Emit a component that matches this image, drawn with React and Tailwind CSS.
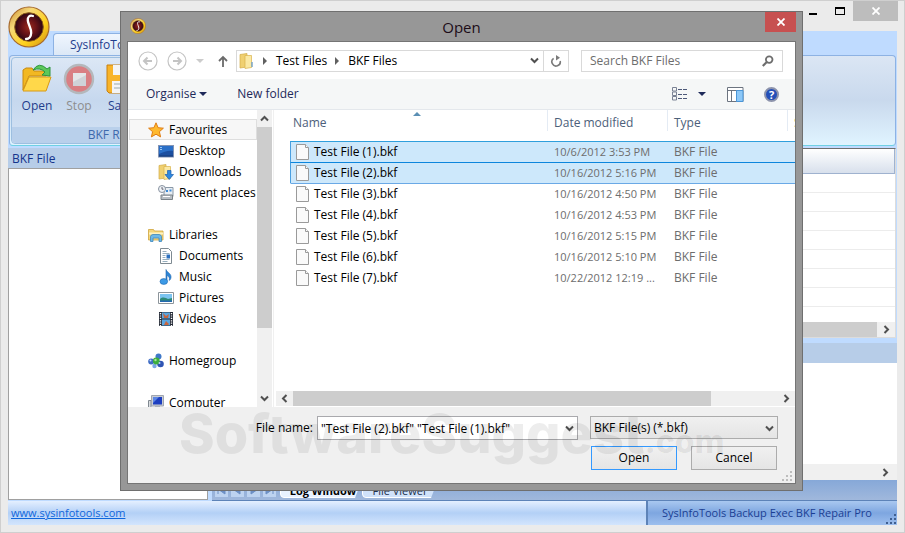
import React from "react";

const files = [
  ["Test File (1).bkf", "10/6/2012 3:53 PM"],
  ["Test File (2).bkf", "10/16/2012 5:16 PM"],
  ["Test File (3).bkf", "10/16/2012 4:50 PM"],
  ["Test File (4).bkf", "10/16/2012 4:53 PM"],
  ["Test File (5).bkf", "10/16/2012 5:15 PM"],
  ["Test File (6).bkf", "10/16/2012 5:10 PM"],
  ["Test File (7).bkf", "10/22/2012 12:19 ..."],
];

const rowEdge = ["border-[#2f9fdc]", "border-[#0c86dd]", "border-[#6aa9e6]"];

function Chevron({ dir = "down", className = "" }) {
  const turn = { down: "", up: "rotate-180", left: "rotate-90", right: "-rotate-90" }[dir];
  return (
    <svg viewBox="0 0 9 9" className={`h-[9px] w-[9px] shrink-0 ${turn} ${className}`} fill="none" stroke="#505050" strokeWidth="2">
      <path d="M1 2.5 4.5 6 8 2.5" />
    </svg>
  );
}

function Caret({ color = "#1e2a5a" }) {
  return (
    <svg viewBox="0 0 8 4" className="h-1 w-2 shrink-0" fill={color}>
      <path d="M0 0h8L4 4z" />
    </svg>
  );
}

function Logo({ className }) {
  return (
    <svg viewBox="0 0 42 42" className={className}>
      <defs>
        <linearGradient id="gold" x1="0" y1="0" x2="1" y2="1">
          <stop offset="0" stopColor="#c8862a" />
          <stop offset=".3" stopColor="#f6d878" />
          <stop offset=".65" stopColor="#ffd21c" />
          <stop offset="1" stopColor="#c98a1c" />
        </linearGradient>
        <radialGradient id="wine">
          <stop offset="0" stopColor="#9a2a1c" />
          <stop offset=".5" stopColor="#6a1418" />
          <stop offset="1" stopColor="#2c0614" />
        </radialGradient>
      </defs>
      <circle cx="21" cy="21" r="20" fill="url(#gold)" stroke="#a5682c" strokeWidth="1.2" />
      <circle cx="21" cy="21" r="14.3" fill="url(#wine)" stroke="#8a5a18" />
      <path d="M25 10c-3.500-1.200-5.600 1-5.200 4.500.4 4.200 3.600 7.500 3.400 12.500-.2 3.500-2.200 6-5.200 6" fill="none" stroke="#fff" strokeWidth="2.300" strokeLinecap="round" />
    </svg>
  );
}

const Folder = ({ children }) => (
  <>
    <path d="M1 1.500 8 .5v13.500l-7 1z" fill="#f0d070" stroke="#d2ac48" strokeWidth=".7" />
    <path d="M6 2.500h6.500v12L6 15.500z" fill="#fbe9a4" stroke="#d8b24c" strokeWidth=".7" />
    {children}
  </>
);

const icons = {
  star: (
    <path d="m8 .8 2.100 4.900 5.300.5-4 3.500 1.200 5.200L8 12.200l-4.600 2.700 1.200-5.200-4-3.500 5.300-.5z" fill="#ffb92e" stroke="#df7d14" />
  ),
  desktop: (
    <>
      <rect x=".5" y="2.500" width="15" height="11.500" fill="#1c4fa0" stroke="#8394b4" />
      <path d="M1 3h14v5C10 7 6 9 1 11z" fill="#2b70c8" />
      <path d="M1 12.500h14v1H1z" fill="#173a74" />
      <path d="M2 4h2v1H2zM2 6h2v1H2z" fill="#9cc8f4" />
    </>
  ),
  folder: (
    <Folder>
      <path d="M13 9v5" stroke="#7aa6c8" strokeWidth="1.500" />
    </Folder>
  ),
  downloads: (
    <Folder>
      <path d="M9.500 6.500h3.500v4h2.500L11.200 15.500 7 10.500h2.500z" fill="#2f88e0" stroke="#1c5fae" strokeWidth=".7" />
    </Folder>
  ),
  recent: (
    <>
      <path d="M6 2.500h9v9H6z" fill="#e8eef4" stroke="#8a98a6" />
      <path d="M8 5h2v2H8zM11.500 4.500h2v2h-2z" fill="#3a8ad8" />
      <path d="M3 10h11.500v4.500H3z" fill="#b8bec4" stroke="#7a8288" />
      <path d="M5 11.500h7" stroke="#fff" />
      <circle cx="4" cy="4" r="3.500" fill="#eef2f6" stroke="#8892a0" />
      <path d="M4 2v2.200h1.500" fill="none" stroke="#445" strokeWidth=".8" />
    </>
  ),
  libraries: (
    <>
      <path d="M.5 13V2.500h5l1 1.500h8.500v9z" fill="#f4d67a" stroke="#cfa53e" strokeWidth=".8" />
      <path d="M1 5.500h14v2H1z" fill="#fdf2c0" />
      <path d="M2.500 14.500V9.500Q3 7.500 5 7.500h6q2 0 2.500 2v5h-2.500v-3.500h-6v3.500z" fill="#6cb8e6" stroke="#3c86bc" strokeWidth=".8" />
    </>
  ),
  documents: (
    <>
      <path d="M2.500.5h8l3 3v12h-11z" fill="#fff" stroke="#7e8a92" />
      <path d="M4.500 3.500h4M4.500 5.500h7M4.500 7.500h3M4.500 9.500h3M4.500 11.500h7M4.500 13.500h5" stroke="#8aa6b8" strokeWidth=".9" />
      <path d="M8.500 6.500h3.500v4H8.500z" fill="#2a70c0" />
    </>
  ),
  music: (
    <>
      <path d="M8 .5c1 3 5.500 4 5 8-.3 1.800-1 2.500-1.800 3 .8-3-.7-4.500-2.200-5v6H8z" fill="#2f86d6" stroke="#1f66b0" strokeWidth=".6" />
      <ellipse cx="5.800" cy="12.500" rx="3.800" ry="2.900" fill="#3c9ae6" stroke="#1f66b0" strokeWidth=".6" />
    </>
  ),
  pictures: (
    <>
      <path d="M.5 2.500h15v11H.5z" fill="#fff" stroke="#8c949a" />
      <path d="M2 4h12v8H2z" fill="#7cc4f0" />
      <path d="M2 9c3-3 6-1 8 0l4-1v4H2z" fill="#2e8a78" />
      <path d="M2 10.500h12V12H2z" fill="#2468b0" />
    </>
  ),
  videos: (
    <>
      <path d="M1 1h14v14H1z" fill="#242a36" />
      <path d="M4 1.500h8v6H4zM4 8.500h8v6H4z" fill="#5aa6e0" />
      <path d="m5 2 3 3 3-2-1 4H6zM6 14l2-4 3 3-1 1z" fill="#c8643c" />
      <path d="M2.500 2v13M13.500 2v13" stroke="#fff" strokeWidth="1.400" strokeDasharray="1.200 1.200" />
    </>
  ),
  homegroup: (
    <>
      <circle cx="10.500" cy="3.500" r="3" fill="#3f78c8" />
      <circle cx="3.200" cy="8.500" r="3" fill="#3f6cc4" />
      <circle cx="12.500" cy="11" r="3.300" fill="#2f55b4" />
      <circle cx="6.500" cy="13" r="2.200" fill="#7aa8e4" />
      <circle cx="8.300" cy="8" r="3.400" fill="#3cae3c" />
      <circle cx="7.500" cy="7" r="1.200" fill="#a8e49a" />
      <circle cx="11.500" cy="10" r="1" fill="#b8d0f4" />
      <circle cx="2.500" cy="7.500" r="1" fill="#c0d8f8" />
    </>
  ),
  computer: (
    <>
      <path d="M.5 5.500h2.500v8H.5z" fill="#d8dce0" stroke="#808890" />
      <path d="M3.500 .5h12v10.500h-12z" fill="#c8ccd4" stroke="#a0a6b0" />
      <path d="M5 2h9v7.500H5z" fill="#1c3ec0" />
      <path d="M5 2h6L5 8z" fill="#5c86e4" />
      <path d="M7 11.500h5v2H7z" fill="#8c949c" />
    </>
  ),
};

function Icon({ name }) {
  return (
    <svg viewBox="0 0 16 16" className="h-4 w-4 shrink-0">
      {icons[name]}
    </svg>
  );
}

const tree = [
  ["star", "Favourites", 0],
  ["desktop", "Desktop", 1],
  ["downloads", "Downloads", 1],
  ["recent", "Recent places", 1],
  null,
  ["libraries", "Libraries", 0],
  ["documents", "Documents", 1],
  ["music", "Music", 1],
  ["pictures", "Pictures", 1],
  ["videos", "Videos", 1],
  null,
  ["homegroup", "Homegroup", 0],
  null,
  ["computer", "Computer", 0],
];

function Grip({ color, className }) {
  return (
    <svg viewBox="0 0 11 11" className={`h-[11px] w-[11px] ${className}`} fill={color}>
      <path d="M8 0h2v2H8zM4 4h2v2H4zM8 4h2v2H8zM0 8h2v2H0zM4 8h2v2H4zM8 8h2v2H8z" />
    </svg>
  );
}

function RibbonButton({ label, disabled, children }) {
  return (
    <button disabled={disabled} className={`flex w-[42px] flex-col items-center ${disabled ? "text-[#8d8d8d]" : "text-[#1f3d8c]"}`}>
      <svg viewBox="0 0 32 32" className="h-8 w-8">{children}</svg>
      <span className="mt-[3px] leading-4">{label}</span>
    </button>
  );
}

function MainWindow() {
  return (
    <div className="flex min-h-screen flex-col border border-[#cfcfcf] bg-[#ebebeb]">
      <header className="flex h-[30px] shrink-0 items-start justify-end pr-[6px]">
        <button aria-label="Minimise" className="flex h-5 w-[26px] items-center justify-center">
          <svg viewBox="0 0 8 8" className="h-2 w-2"><path d="M0 6h8v2H0z" /></svg>
        </button>
        <button aria-label="Maximise" className="flex h-5 w-[27px] items-center justify-center">
          <svg viewBox="0 0 10 8" className="h-2 w-[10px]"><path d="M0 0h10v8H0zM1 2v5h8V2z" fillRule="evenodd" /></svg>
        </button>
        <button aria-label="Close" className="flex h-5 w-[45px] items-center justify-center bg-[#bdbdbd]">
          <svg viewBox="0 0 8 8" className="h-2 w-2" stroke="#fff" strokeWidth="1.800"><path d="m.5.5 7 7m0-7-7 7" /></svg>
        </button>
      </header>

      <div className="mx-[7px] mb-[7px] flex flex-1 flex-col bg-[#bfdbff]">
        <div className="flex h-6 shrink-0 items-end pl-[45px]">
          <button className="h-[22px] w-[110px] rounded-t border border-b-0 border-[#8db2e3] bg-gradient-to-b from-[#f0f6fe] to-[#dce8f6] pl-4 text-left whitespace-nowrap text-[#1f3d8c]">SysInfoTools</button>
        </div>
        <div className="mx-px flex h-[91px] shrink-0 flex-col overflow-hidden rounded border border-[#8db2e3] border-b-[#6fd0e4] bg-gradient-to-b from-[#dbe6f4] via-[#c9d9ed] to-[#e0f4ff] p-px">
          <div className="flex w-[214px] flex-1 flex-col rounded border border-[#9dbfe0] bg-gradient-to-b from-[#dce7f5] via-[#c6d8ee] to-[#d3e2f4] text-xs">
            <div className="flex flex-1 pt-[5px] pl-1">
              <RibbonButton label="Open">
                <path d="M2 27V7l3-2h6l2 3h12v5H8z" fill="#f2b822" stroke="#c78a10" />
                <path d="m2 28 6-14h22l-5 14z" fill="#ffd84a" stroke="#d89a14" />
                <path d="M12 7Q18-2 26 6l3-2v9l-8-1 3-3q-5-5-12-2z" fill="#5cc85a" stroke="#2f9440" />
              </RibbonButton>
              <RibbonButton label="Stop" disabled>
                <circle cx="16" cy="16" r="14" fill="#d97f83" stroke="#b4b8bc" strokeWidth="2.400" />
                <path d="M10 10h13v13H10z" fill="#e4e6e8" />
                <path d="M10 19 23 12v11H10z" fill="#cfd3d8" />
              </RibbonButton>
              <RibbonButton label="Save">
                <path d="M2 2h28v28H4l-2-2z" fill="#f8b42a" stroke="#c78010" />
                <path d="M8 2h16v10H8zM7 18h18v12H7z" fill="#f4f4f4" />
                <path d="M9 21h14M9 25h14" stroke="#9aa" />
              </RibbonButton>
            </div>
            <div className="h-4 rounded-b bg-[#b9d0eb] text-center text-xs leading-4 text-[#3f69ac]">BKF Repair</div>
          </div>
        </div>

        <div className="flex flex-1 pt-[2px]">
          <aside className="flex w-[200px] flex-col">
            <h2 className="h-5 bg-[#b7cde8] pl-1 text-xs leading-[22px] text-[#15348c]">BKF File</h2>
            <div className="mb-px flex-1 border border-[#a0a0a0] bg-white" />
          </aside>
          <section className="ml-1 flex flex-1 flex-col">
            <div className="mr-px flex h-[190px] shrink-0 flex-col border-t border-t-[#6d6d6d] border-r border-r-[#dcdcdc] border-b border-b-[#dcdcdc] bg-white">
              <div className="h-[25px] border-r border-b border-[#9fb2cf] bg-gradient-to-b from-white to-[#d8e0ec]" />
              <div className="flex flex-1 flex-col">
                {[0, 1, 2, 3, 4, 5, 6].map((i) => (
                  <div key={i} className="h-[19px] border-b border-[#ececec]" />
                ))}
              </div>
              <div className="flex h-[15px] items-center bg-[#f0f0f0]">
                <div className="h-full flex-1 bg-[#cdcdcd]" />
                <div className="flex w-[18px] justify-center"><Chevron dir="right" /></div>
              </div>
            </div>
            <div className="mt-[5px] h-5 bg-[#b7cde8]" />
            <div className="flex flex-1 flex-col bg-white">
              <div className="flex-1" />
              <div className="flex h-4 items-center justify-end bg-[#f0f0f0] pr-[7px]"><Chevron dir="right" /></div>
            </div>
            <nav className="flex h-[21px] shrink-0 items-start border-b border-[#5d83b8] bg-gradient-to-b from-[#86a8d8] to-[#a0b8dc] text-[11px] leading-[20px]">
              {["M3 3v7M10 3 5 6.500l5 3.500z", "M9 3 4 6.500 9 10z", "M4 3l5 3.500L4 10z", "M3 3l5 3.500L3 10zM10 3v7"].map((d, i) => (
                <button key={i} aria-label={["First", "Previous", "Next", "Last"][i]} className="mt-1 ml-[3px] h-[13px] w-[13px] bg-[#bdd3f0]">
                  <svg viewBox="0 0 13 13" className="h-[13px] w-[13px]" fill="#6c8fc4" stroke="#6c8fc4"><path d={d} /></svg>
                </button>
              ))}
              <button className="ml-1 h-[18px] w-[82px] rounded-b border border-white bg-[#e8f2ff] pl-1 font-bold whitespace-nowrap text-black [clip-path:polygon(0_0,100%_0,calc(100%-7px)_100%,0_100%)]">Log Window</button>
              <button className="h-[18px] w-[76px] rounded-b border border-white bg-[#d0e2fa] whitespace-nowrap text-[#20304c] [clip-path:polygon(0_0,100%_0,calc(100%-7px)_100%,0_100%)]">File Viewer</button>
            </nav>
          </section>
        </div>

        <footer className="flex h-6 shrink-0 items-stretch bg-gradient-to-b from-[#e4efff] via-[#b3d0f6] to-[#d3e5fd] text-[11px] leading-[24px]">
          <a href="http://www.sysinfotools.com" className="flex-1 pl-[3px] text-[#0f66dc] underline">www.sysinfotools.com</a>
          <div className="flex w-[251px] items-end justify-between border-l-2 border-[#5d83b8] bg-gradient-to-b from-[#a9c8f0] via-[#7ea6e0] to-[#9dbfee] pl-[14px] text-[#1b3f94]">
            <span className="whitespace-nowrap">SysInfoTools Backup Exec BKF Repair Pro</span>
            <Grip color="#3f5f90" className="shrink-0" />
          </div>
        </footer>
      </div>
      <Logo className="absolute top-[6px] left-2 h-[42px] w-[42px]" />
    </div>
  );
}

function NavRow() {
  return (
    <div className="flex h-[37px] shrink-0 items-center pr-3 pl-[10px]">
      {["M14 10H6m3.500-3.500L6 10l3.500 3.500", "M6 10h8m-3.500-3.500L14 10l-3.500 3.500"].map((d, i) => (
        <button key={d} aria-label={i ? "Forward" : "Back"} className="mr-[9px]">
          <svg viewBox="0 0 20 20" className="h-5 w-5" fill="none" stroke="#c4c4c4">
            <circle cx="10" cy="10" r="9" strokeWidth="1.200" />
            <path d={d} strokeWidth="2" />
          </svg>
        </button>
      ))}
      <Caret color="#cccccc" />
      <button aria-label="Up" className="ml-[14px]">
        <svg viewBox="0 0 10 12" className="h-3 w-[10px]" fill="none" stroke="#6a6a6a" strokeWidth="1.800"><path d="M5 12V2M1 6l4-4 4 4" /></svg>
      </button>
      <div className="ml-2 flex h-[22px] flex-1 items-center border border-[#d9d9d9] pl-[2px]">
        <Icon name="folder" />
        <svg viewBox="0 0 4 8" className="ml-2 h-2 w-1" fill="#606060"><path d="m0 0 4 4-4 4z" /></svg>
        <button className="ml-[9px] whitespace-nowrap">Test Files</button>
        <svg viewBox="0 0 4 8" className="ml-2 h-2 w-1" fill="#606060"><path d="m0 0 4 4-4 4z" /></svg>
        <button className="ml-[9px] whitespace-nowrap">BKF Files</button>
        <button aria-label="Previous locations" className="mr-[4px] ml-auto"><Chevron /></button>
        <button aria-label="Refresh" className="flex h-full w-[25px] items-center justify-center border-l border-[#d9d9d9]">
          <svg viewBox="0 0 12 12" className="h-3 w-3" fill="none" stroke="#7a7a7a" strokeWidth="1.600">
            <path d="M3.600 3.400A4.200 4.200 0 1 0 10.200 6" />
            <path d="M6 0v5.500L10 2.700z" fill="#7a7a7a" stroke="none" />
          </svg>
        </button>
      </div>
      <div className="ml-3 flex h-[22px] w-[202px] items-center border border-[#d9d9d9] pr-2">
        <input aria-label="Search" placeholder="Search BKF Files" className="min-w-0 flex-1 bg-transparent pl-2 outline-none placeholder:text-[#6d6d6d]" />
        <svg viewBox="0 0 12 12" className="h-3 w-3" fill="none" stroke="#6d6d6d" strokeWidth="1.800">
          <circle cx="7.200" cy="4.600" r="3.300" /><path d="M4.800 7 .8 11" strokeWidth="2.200" />
        </svg>
      </div>
    </div>
  );
}

function Toolbar() {
  return (
    <div className="flex h-[31px] shrink-0 items-center border-b border-[#e4e8ec] bg-[#f5f7f7] pr-4 pl-[18px] text-[#1e2a5a]">
      <button className="flex items-center gap-[3px]">Organise <Caret /></button>
      <button className="ml-[30px]">New folder</button>
      <button aria-label="Change view" className="ml-auto flex items-center gap-[10px]">
        <svg viewBox="0 0 16 14" className="h-[14px] w-4" fill="none" stroke="#7a8294">
          <path d="M.5.5h4v3.500h-4zM.5 5h4v3.500h-4zM.5 9.500h4v3.500h-4z" />
          <path d="M6 2.500h10M6 7.500h10M6 11.500h10" stroke="#4c5878" strokeDasharray="4 1" />
        </svg>
        <Caret />
      </button>
      <button aria-label="Preview pane" className="ml-[21px]">
        <svg viewBox="0 0 17 15" className="h-[15px] w-[17px]" fill="#fff" stroke="#6c7480">
          <path d="M.5.500h15.500v14H.5zM.5 3.500h15.500M4.500 3.500v11" /><path d="M9.500 3.500h6.500V14.500H9.500z" fill="#8cc8f8" stroke="#4a96d8" />
        </svg>
      </button>
      <button aria-label="Help" className="ml-5 flex h-[15px] w-[15px] items-center justify-center rounded-full border-2 border-[#8d94ac] bg-[#2450b8] text-[11px] leading-none font-bold text-white">?</button>
    </div>
  );
}

function Sidebar() {
  return (
    <div className="flex shrink-0 overflow-hidden">
      <ul className="w-[129px] pt-[9px] pl-px">
        {tree.map((n, i) =>
          n ? (
            <li key={i} className={`flex h-[21px] items-center gap-[5px] border whitespace-nowrap ${i === 0 ? "border-[#dedede] bg-[#f7f7f7]" : "border-transparent"} ${n[2] ? "pl-7" : "pl-[18px]"}`}>
              <Icon name={n[0]} />
              {n[1]}
            </li>
          ) : (
            <li key={i} className="h-[21px]" />
          )
        )}
      </ul>
      <div className="flex w-[15px] flex-col items-center bg-[#f0f0f0]">
        <div className="flex h-[17px] items-center"><Chevron dir="up" /></div>
        <div className="h-[201px] w-full bg-[#cdcdcd]" />
        <div className="mt-auto flex h-[17px] items-center"><Chevron /></div>
      </div>
      <div className="ml-px w-[3px] border-l border-[#f0f0f0]" />
    </div>
  );
}

function HeaderCell({ children, className = "" }) {
  return (
    <th scope="col" className="relative h-[31px] p-0 text-left align-top font-normal text-[#4c607a]">
      <span className={`block h-[21px] overflow-hidden border-l pt-1 pl-[6px] leading-[18px] ${className}`}>{children}</span>
    </th>
  );
}

function FileList() {
  return (
    <div className="flex min-w-0 flex-1 flex-col">
      <div className="flex-1 overflow-hidden pl-[14px]">
        <table className="w-full table-fixed border-separate border-spacing-0">
          <colgroup>
            <col />
            <col className="w-[120px]" />
            <col className="w-[120px]" />
            <col className="w-2" />
          </colgroup>
          <thead>
            <tr>
              <HeaderCell className="-ml-1 border-transparent">
                Name
                <svg viewBox="0 0 8 4" className="absolute top-[2px] left-[123px] h-1 w-2" fill="#5b8fb4"><path d="M0 4h8L4 0z" /></svg>
              </HeaderCell>
              <HeaderCell className="border-[#e4ebf4]">Date modified</HeaderCell>
              <HeaderCell className="border-[#e4ebf4]">Type</HeaderCell>
              <HeaderCell className="border-[#e4ebf4] text-[#d9a860]">S</HeaderCell>
            </tr>
          </thead>
          <tbody className="whitespace-nowrap text-[#6d6d6d]">
            {files.map(([name, date], i) => {
              const cell = `h-[21px] border-t p-0 leading-5 ${rowEdge[i] || "border-transparent"} ${i < 2 ? "bg-[#cde8fb]" : ""}`;
              return (
                <tr key={name} aria-selected={i < 2}>
                  <td className={`${cell} text-black ${i < 2 ? "border-l border-l-[#4a9fe0]" : "border-l border-l-transparent"}`}>
                    <span className="flex items-center gap-[5px] pl-[5px]">
                      <svg viewBox="0 0 13 16" className="h-4 w-[13px]" fill="#fafafa" stroke="#9a9a9a"><path d="M.5.500h9l3 3v12H.5z" /><path d="M9.500.500v3h3" /></svg>
                      {name}
                    </span>
                  </td>
                  <td className={`${cell} pl-[7px] text-[11px]`}>{date}</td>
                  <td className={`${cell} pl-[7px]`}>BKF File</td>
                  <td className={cell} />
                </tr>
              );
            })}
          </tbody>
        </table>
      </div>
      <div className="mb-px flex h-[15px] items-center bg-[#f0f0f0]">
        <div className="flex w-[17px] justify-center"><Chevron dir="left" /></div>
        <div className="h-full flex-1 bg-[#cdcdcd]" />
        <div className="flex w-[84px] justify-end pr-1"><Chevron dir="right" /></div>
      </div>
    </div>
  );
}

function DialogFooter() {
  return (
    <div className="relative h-[76px] shrink-0 bg-[#f0f0f0] pt-[9px] pr-[17px]">
      <div className="flex justify-end">
        <label htmlFor="filename" className="mr-1 leading-6">File name:</label>
        <div className="relative w-[261px]">
          <input id="filename" defaultValue={'"Test File (2).bkf" "Test File (1).bkf"'} className="h-6 w-full border border-[#a9a9ad] bg-white pr-5 pl-[3px] outline-none" />
          <Chevron className="absolute top-2 right-1" />
        </div>
        <div className="relative ml-3 w-[188px]">
          <select aria-label="File type" className="h-[23px] w-full appearance-none border border-[#acacac] bg-gradient-to-b from-[#f0f0f0] to-[#e5e5e5] pl-[3px] outline-none">
            <option>BKF File(s) (*.bkf)</option>
          </select>
          <Chevron className="pointer-events-none absolute top-2 right-1" />
        </div>
      </div>
      <div className="mt-[6px] flex justify-end gap-[14px] pr-px">
        <button className="h-6 w-[86px] border border-[#3399ff] bg-gradient-to-b from-[#f0f0f0] to-[#e5e5e5]">Open</button>
        <button className="h-6 w-[86px] border border-[#acacac] bg-gradient-to-b from-[#f0f0f0] to-[#e5e5e5]">Cancel</button>
      </div>
      <div aria-hidden="true" className="pointer-events-none absolute top-[-5px] left-[51px] font-['Inter',sans-serif] text-[54px] leading-[64px] font-extrabold whitespace-nowrap text-black/7">
        SoftwareSuggest<span className="text-[32px]">.com</span>
      </div>
      <Grip color="#bdbdbd" className="absolute right-[2px] bottom-[1px]" />
    </div>
  );
}

function OpenDialog() {
  return (
    <div role="dialog" aria-label="Open" className="absolute top-[11px] right-[102px] bottom-[42px] left-[120px] flex flex-col border border-[#6f6f6f] bg-[#979797] px-[6px] pb-[6px] text-xs text-black">
      <div className="flex h-[29px] shrink-0 items-start">
        <Logo className="mt-[6px] ml-[3px] h-4 w-4" />
        <h1 className="flex-1 pl-3 text-center text-[15px] leading-[30px] text-[#1c0c18]">Open</h1>
        <button aria-label="Close" className="flex h-[20px] w-[31px] items-center justify-center bg-[#c75050]">
          <svg viewBox="0 0 8 8" className="h-2 w-2" stroke="#fff" strokeWidth="1.800"><path d="m.5.5 7 7m0-7-7 7" /></svg>
        </button>
      </div>
      <div className="flex min-h-0 flex-1 flex-col border border-[#757575] bg-white">
        <NavRow />
        <Toolbar />
        <div className="flex min-h-0 flex-1">
          <Sidebar />
          <FileList />
        </div>
        <DialogFooter />
      </div>
    </div>
  );
}

export default function App() {
  return (
    <main className="relative min-h-screen overflow-hidden font-['Open_Sans','Noto_Sans',sans-serif] text-xs">
      <MainWindow />
      <OpenDialog />
    </main>
  );
}
